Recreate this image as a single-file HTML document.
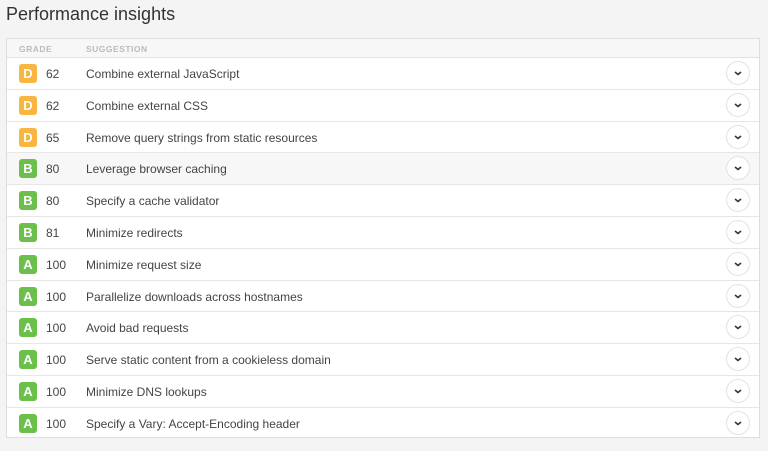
<!DOCTYPE html>
<html><head><style>
body{margin:0;background:#f4f4f4;font-family:"Liberation Sans",Arial,sans-serif;width:768px;height:451px;overflow:hidden}
h1{position:absolute;left:6px;top:4px;margin:0;font-weight:normal;font-size:18px;color:#333}
.panel{position:absolute;left:6px;top:38px;width:752px;height:398px;background:#fff;border:1px solid #ddd}
.hdr{height:18px;border-bottom:1px solid #e2e2e2;background:#f7f7f7;font-size:8.5px;font-weight:bold;color:#bbb;letter-spacing:.5px;position:relative}
.hdr span{position:absolute;top:5px}
.row{height:30.8px;border-bottom:1px solid #e6e6e6;position:relative;font-size:12px;color:#444}
.row:last-child{border-bottom:none}
.row.h{background:#f7f7f7}
.b{position:absolute;left:12px;top:6px;width:18px;height:19px;border-radius:3px;color:#fff;font-weight:bold;font-size:13px;text-align:center;line-height:19px}
.D{background:#f9b542}.B,.A{background:#6cc04a}
.n{position:absolute;left:39px;top:9px}
.t{position:absolute;left:79px;top:9px}
.c{position:absolute;left:719px;top:3px;width:22px;height:22px;border:1px solid #e2e2e2;border-radius:50%;background:#fff}
.c svg{position:absolute;left:7px;top:9px}
</style></head><body>
<h1>Performance insights</h1>
<div class="panel">
<div class="hdr"><span style="left:12px">GRADE</span><span style="left:79px">SUGGESTION</span></div>
<div class="row"><div class="b D">D</div><div class="n">62</div><div class="t">Combine external JavaScript</div><div class="c"><svg width="8" height="5"><path d="M1 1l3 2.5L7 1" stroke="#333" stroke-width="1.6" fill="none"/></svg></div></div>
<div class="row"><div class="b D">D</div><div class="n">62</div><div class="t">Combine external CSS</div><div class="c"><svg width="8" height="5"><path d="M1 1l3 2.5L7 1" stroke="#333" stroke-width="1.6" fill="none"/></svg></div></div>
<div class="row"><div class="b D">D</div><div class="n">65</div><div class="t">Remove query strings from static resources</div><div class="c"><svg width="8" height="5"><path d="M1 1l3 2.5L7 1" stroke="#333" stroke-width="1.6" fill="none"/></svg></div></div>
<div class="row h"><div class="b B">B</div><div class="n">80</div><div class="t">Leverage browser caching</div><div class="c"><svg width="8" height="5"><path d="M1 1l3 2.5L7 1" stroke="#333" stroke-width="1.6" fill="none"/></svg></div></div>
<div class="row"><div class="b B">B</div><div class="n">80</div><div class="t">Specify a cache validator</div><div class="c"><svg width="8" height="5"><path d="M1 1l3 2.5L7 1" stroke="#333" stroke-width="1.6" fill="none"/></svg></div></div>
<div class="row"><div class="b B">B</div><div class="n">81</div><div class="t">Minimize redirects</div><div class="c"><svg width="8" height="5"><path d="M1 1l3 2.5L7 1" stroke="#333" stroke-width="1.6" fill="none"/></svg></div></div>
<div class="row"><div class="b A">A</div><div class="n">100</div><div class="t">Minimize request size</div><div class="c"><svg width="8" height="5"><path d="M1 1l3 2.5L7 1" stroke="#333" stroke-width="1.6" fill="none"/></svg></div></div>
<div class="row"><div class="b A">A</div><div class="n">100</div><div class="t">Parallelize downloads across hostnames</div><div class="c"><svg width="8" height="5"><path d="M1 1l3 2.5L7 1" stroke="#333" stroke-width="1.6" fill="none"/></svg></div></div>
<div class="row"><div class="b A">A</div><div class="n">100</div><div class="t">Avoid bad requests</div><div class="c"><svg width="8" height="5"><path d="M1 1l3 2.5L7 1" stroke="#333" stroke-width="1.6" fill="none"/></svg></div></div>
<div class="row"><div class="b A">A</div><div class="n">100</div><div class="t">Serve static content from a cookieless domain</div><div class="c"><svg width="8" height="5"><path d="M1 1l3 2.5L7 1" stroke="#333" stroke-width="1.6" fill="none"/></svg></div></div>
<div class="row"><div class="b A">A</div><div class="n">100</div><div class="t">Minimize DNS lookups</div><div class="c"><svg width="8" height="5"><path d="M1 1l3 2.5L7 1" stroke="#333" stroke-width="1.6" fill="none"/></svg></div></div>
<div class="row"><div class="b A">A</div><div class="n">100</div><div class="t">Specify a Vary: Accept-Encoding header</div><div class="c"><svg width="8" height="5"><path d="M1 1l3 2.5L7 1" stroke="#333" stroke-width="1.6" fill="none"/></svg></div></div>
</div>
</body></html>
